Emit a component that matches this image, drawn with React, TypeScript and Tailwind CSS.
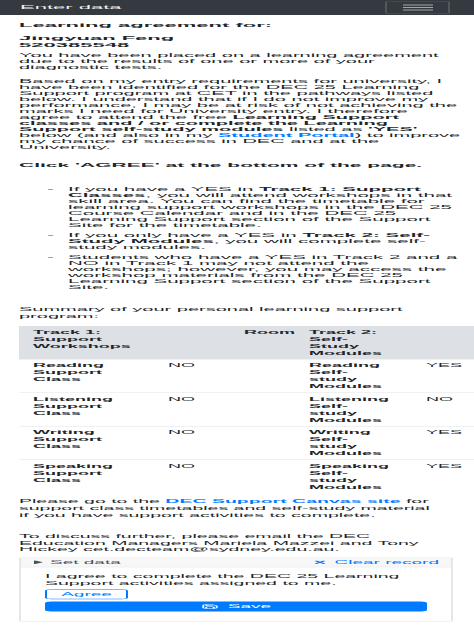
import { Save } from 'lucide-react'

const rows = [
  { t1: 'Reading Support Class', v1: 'NO', t2: 'Reading Self-study Modules', v2: 'YES' },
  { t1: 'Listening Support Class', v1: 'NO', t2: 'Listening Self-study Modules', v2: 'NO' },
  { t1: 'Writing Support Class', v1: 'NO', t2: 'Writing Self-study Modules', v2: 'YES' },
  { t1: 'Speaking Support Class', v1: 'NO', t2: 'Speaking Self-study Modules', v2: 'YES' },
]

function Bullet({ children }: { children: React.ReactNode }) {
  return (
    <li className="flex">
      <span className="w-[49px] shrink-0 pl-[28px]">-</span>
      <div className="w-[401px] shrink-0">{children}</div>
    </li>
  )
}

export default function App() {
  return (
    <div className="h-[632px] w-[474px] overflow-hidden bg-white">
      {/* the screenshot is squashed vertically, so the page is laid out tall and scaled down */}
      <div className="w-[474px] h-[2528px] origin-top scale-y-[0.25] font-['Liberation_Sans',Arial,sans-serif] text-[#212529]">
        <nav className="h-[60px] bg-[#343a40] flex items-center pl-[20px] pr-[24px]">
          <span className="text-[22px] leading-none text-[#f1f1f1]">Enter data</span>
          <button className="ml-auto w-[65px] h-[52px] rounded-[5px] border-2 border-white/15 flex items-center justify-center">
            <svg width="30" height="30" viewBox="0 0 30 30">
              <path d="M0 5h30M0 15h30M0 25h30" stroke="rgba(255,255,255,0.55)" strokeWidth="3.5" />
            </svg>
          </button>
        </nav>

        <main className="px-[19px]">
          <h1 className="mt-[26px] text-[22px] font-bold leading-[32px]">Learning agreement for:</h1>
          <div className="mt-[19px] text-[22px] font-bold leading-[28px]">
            Jingyuan Feng
            <br />
            520385548
          </div>

          <p className="mt-[17px] w-[445px] text-[20px] leading-[24px]">
            You have been placed on a learning agreement due to the results of one or more of your diagnostic tests.
          </p>
          <p className="mt-[29px] w-[445px] text-[20px] leading-[24px]">
            Based on my entry requirements for university, I have been identified for the DEC 25 Learning Support program
            at CET in the pathways listed below. I understand that if I do not improve my performance, I may be at risk of
            not achieving the marks I need for University entry. I therefore agree to attend the free{' '}
            <b>Learning Support classes and / or complete the Learning Support self-study modules</b> listed as{' '}
            <b>'YES'</b> below (and also in my <b className="text-[#007bff]">Student Portal</b>) to improve my chance of
            success in DEC and at the University.
          </p>

          <p className="mt-[48px] text-[21px] font-bold leading-[29px]">Click 'AGREE' at the bottom of the page.</p>

          <ul className="mt-[70px] flex flex-col gap-[15px] text-[20.5px] leading-[24px]">
            <Bullet>
              If you have a YES in <b>Track 1: Support Classes</b>, you will attend workshops in that skill area. You can
              find the timetable for learning support workshops in the DEC 25 Course Calendar and in the DEC 25 Learning
              Support section of the Support Site for the timetable.
            </Bullet>
            <Bullet>
              If you only have a YES in <b>Track 2: Self-Study Modules</b>, you will complete self-study modules.
            </Bullet>
            <Bullet>
              Students who have a YES in Track 2 and a NO in Track 1 may not attend the workshops; however, you may access
              the workshop materials from the DEC 25 Learning Support section of the Support Site.
            </Bullet>
          </ul>

          <p className="mt-[64px] w-[445px] text-[20px] leading-[26.5px]">Summary of your personal learning support program:</p>

          <div className="mt-[27px] w-[470px] text-[18px] leading-[28px]">
            <div className="grid grid-cols-[137px_75px_65px_117px_76px] bg-[#dde1e6] font-bold">
              <div className="py-[10px] pl-[14px] pr-[12px]">Track 1: Support Workshops</div>
              <div />
              <div className="py-[10px] pl-[13px]">Room</div>
              <div className="py-[10px] pl-[13px] pr-[20px]">Track 2: Self-Study Modules</div>
              <div />
            </div>
            {rows.map(r => (
              <div key={r.t1} className="grid grid-cols-[137px_75px_65px_117px_76px] border-t-2 border-[#dee2e6]">
                <div className="py-[10px] pl-[14px] pr-[12px] font-bold">{r.t1}</div>
                <div className="py-[10px] pl-[12px]">{r.v1}</div>
                <div />
                <div className="py-[10px] pl-[13px] pr-[20px] font-bold">{r.t2}</div>
                <div className="py-[10px] pl-[13px]">{r.v2}</div>
              </div>
            ))}
          </div>

          <p className="mt-[17px] w-[415px] text-[19.5px] leading-[28.5px]">
            Please go to the <b className="text-[#007bff]">DEC Support Canvas site</b> for support class timetables and
            self-study material if you have support activities to complete.
          </p>
          <p className="mt-[57px] w-[415px] text-[19.5px] leading-[26.5px]">
            To discuss further, please email the DEC Education Managers Mariela Mazzei and Tony Hickey
            cet.decteam@sydney.edu.au.
          </p>

          <div className="mt-[17px] w-[434px] rounded-[6px] border-2 border-[#e3e6ea]">
            <div className="h-[39px] flex items-center pl-[13px] pr-[12px] bg-[#f7f7f7] border-b-2 border-[#e3e6ea] text-[19px]">
              <svg width="9" height="16" viewBox="0 0 9 12" preserveAspectRatio="none" className="mr-[7px]">
                <path d="M0 0L9 6L0 12Z" fill="#495057" />
              </svg>
              <span className="text-[#495057]">Set data</span>
              <span className="ml-auto flex items-center gap-[8px] text-[#007bff]">
                <svg width="12" height="16" viewBox="0 0 12 12" preserveAspectRatio="none">
                  <path d="M1.5 1.5L10.5 10.5M10.5 1.5L1.5 10.5" stroke="#007bff" strokeWidth="3" />
                </svg>
                Clear record
              </span>
            </div>
            <div className="pt-[24px] pb-[40px] px-[24px]">
              <p className="text-[19.5px] leading-[26.5px]">I agree to complete the DEC 25 Learning Support activities assigned to me.</p>
              <button className="mt-[11px] h-[40px] w-[83px] rounded-[6px] border-2 border-[#007bff] text-[19px] text-[#007bff]">
                Agree
              </button>
              <button className="mt-[9px] h-[40px] w-full rounded-[6px] bg-[#007bff] text-white text-[19px] flex items-center justify-center gap-[9px]">
                <Save width={18} height={26} strokeWidth={2.5} />
                Save
              </button>
            </div>
          </div>
        </main>
      </div>
    </div>
  )
}
